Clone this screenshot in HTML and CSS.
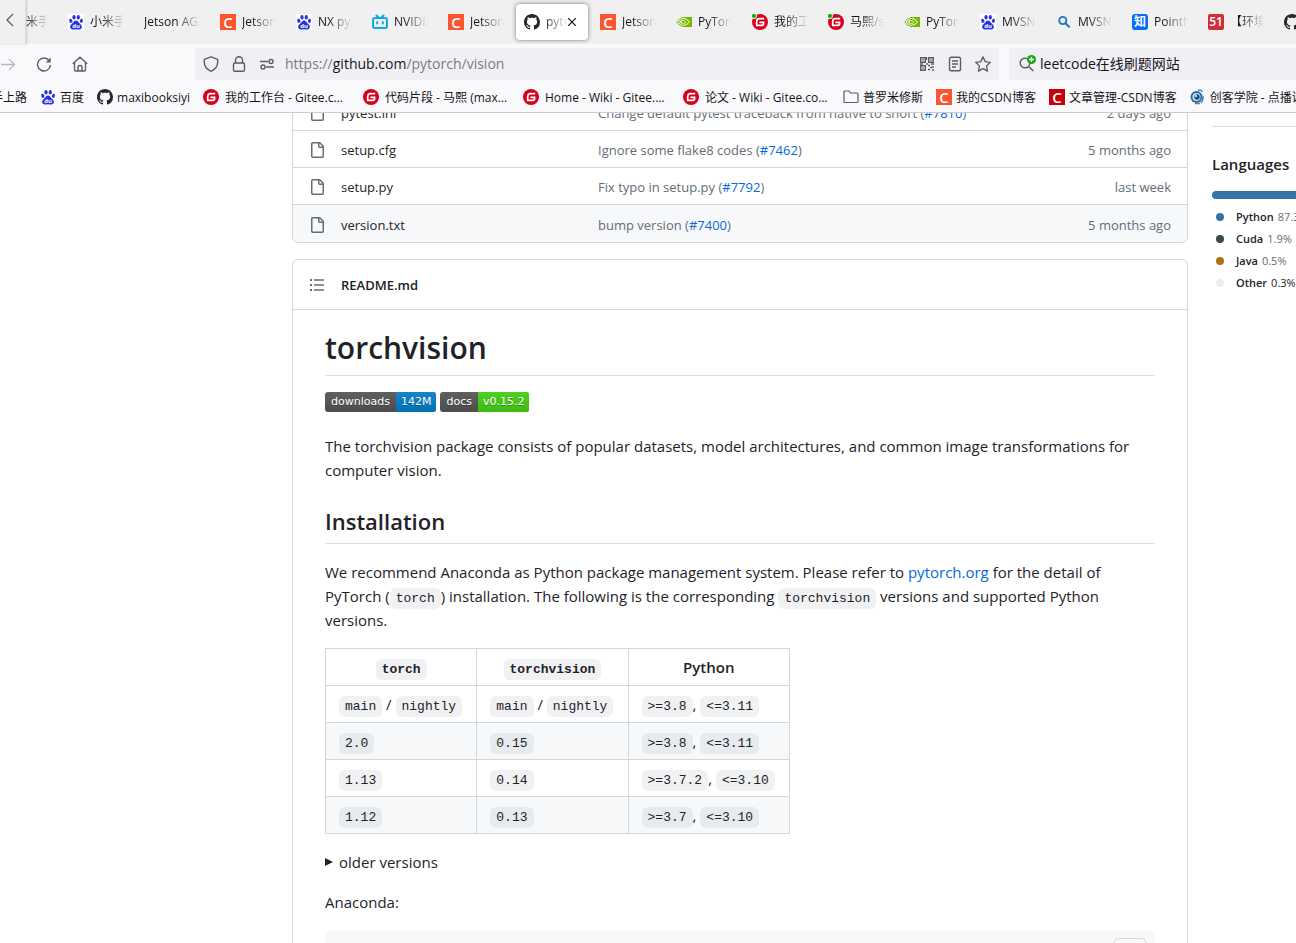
FILE: index.html
```html
<!DOCTYPE html>
<html lang="en">
<head>
    <meta charset="UTF-8">
    <meta name="viewport" content="width=device-width, initial-scale=1.0">
    <title>pytorch/vision</title>
    <link rel="stylesheet" href="styles.css">
</head>
<body>
    <svg class="sprite" aria-hidden="true">
        <symbol id="baidu" viewBox="0 0 16 16">
            <rect width="16" height="16" rx="1" fill="#fff"/>
            <g fill="#2932e1">
                <ellipse cx="6" cy="3.2" rx="1.6" ry="2.2"/>
                <ellipse cx="10.3" cy="3.2" rx="1.6" ry="2.2"/>
                <ellipse cx="2.8" cy="6.8" rx="1.6" ry="2.1" transform="rotate(-15 2.8 6.8)"/>
                <ellipse cx="13.4" cy="6.8" rx="1.5" ry="2.1" transform="rotate(15 13.4 6.8)"/>
                <path d="M8 6.4c1.6 0 2.3 1.4 3.3 2.5 1.2 1.3 2.6 2 2.6 3.9 0 1.700-1.200 2.700-2.700 2.700-1.200 0-2-.3-3.200-.3s-2 .3-3.200.3c-1.500 0-2.700-1-2.700-2.700 0-1.900 1.400-2.600 2.600-3.900C5.700 7.800 6.400 6.400 8 6.400z"/>
            </g>
            <text x="8" y="14" font-size="6" font-weight="700" text-anchor="middle" fill="#fff">du</text>
        </symbol>
        <symbol id="github" viewBox="0 0 16 16">
            <path fill="#24292f" fill-rule="evenodd" d="M8 0C3.580 0 0 3.580 0 8c0 3.540 2.290 6.530 5.470 7.590.4.070.550-.170.550-.380 0-.190-.010-.820-.010-1.490-2.010.370-2.530-.490-2.690-.940-.090-.230-.480-.940-.820-1.130-.280-.150-.680-.520-.010-.530.630-.010 1.080.580 1.230.820.720 1.210 1.870.870 2.330.660.070-.520.280-.870.510-1.070-1.780-.2-3.640-.890-3.640-3.950 0-.870.310-1.590.820-2.150-.080-.2-.360-1.020.080-2.120 0 0 .670-.210 2.200.820.640-.180 1.320-.270 2-.270s1.360.090 2 .270c1.530-1.040 2.200-.820 2.200-.820.440 1.100.160 1.920.080 2.120.510.560.820 1.270.820 2.150 0 3.070-1.870 3.750-3.650 3.950.290.250.540.730.540 1.480 0 1.070-.010 1.930-.010 2.200 0 .210.150.460.550.380A8.010 8.010 0 0 0 16 8c0-4.420-3.580-8-8-8z"/>
        </symbol>
        <symbol id="gitee" viewBox="0 0 16 16">
            <circle cx="8" cy="8" r="8" fill="#d8001b"/>
            <path d="M12.200 4.600H7.300Q4.700 4.600 4.700 7.200v4.200h5q1.900 0 1.900-1.900V8.300H7.400" fill="none" stroke="#fff" stroke-width="1.700"/>
        </symbol>
        <symbol id="gitee-on" viewBox="0 0 16 16">
            <use href="#gitee"/>
            <circle cx="2" cy="2" r="2.900" fill="#f0f0f0"/>
            <circle cx="2" cy="2" r="2.100" fill="#0ab50a"/>
        </symbol>
        <symbol id="bilibili" viewBox="0 0 16 16">
            <g fill="none" stroke="#0fa8e0" stroke-width="2" stroke-linecap="round">
                <path d="M4.500 1.500l2 2M11.500 1.500l-2 2"/>
                <rect x="1" y="4" width="14" height="10" rx="2"/>
                <path d="M5.200 8v1.500M10.800 8v1.500"/>
            </g>
        </symbol>
        <symbol id="nvidia" viewBox="0 0 16 16">
            <path d="M6 3h10v10H6z" fill="#76b900"/>
            <path d="M.8 8C3 4.500 6 4 8.500 4.500S13 7 14 8c-2 2.500-4.500 4-7.500 3.800S2 10 .8 8z" fill="none" stroke="#76b900"/>
            <path d="M6 4.400c3-.3 5.500 1 7.500 3.600-2 2.300-4.500 3.500-7.500 3.300" fill="none" stroke="#fff"/>
            <path d="M3 8c1.500-2.300 5.500-2.800 7.500 0C9 10.500 5 11 3 8z" fill="none" stroke="#76b900"/>
            <path d="M6 6.400c1.800-.2 3 .4 4 1.600-1 1.300-2.300 1.900-4 1.700" fill="none" stroke="#fff" stroke-width=".8"/>
        </symbol>
        <symbol id="lens" viewBox="0 0 16 16">
            <circle cx="6.800" cy="6.500" r="3.600" fill="none" stroke="#1a73c9" stroke-width="1.800"/>
            <path d="M9.500 9.200l3.500 3.500" stroke="#1a73c9" stroke-width="2" stroke-linecap="round"/>
        </symbol>
        <symbol id="maker" viewBox="0 0 16 16">
            <circle cx="6.500" cy="8" r="6" fill="#2a6da6"/>
            <circle cx="6.500" cy="8" r="4" fill="#cfe4f2"/>
            <circle cx="7" cy="8" r="2.700" fill="#174c80"/>
            <circle cx="6" cy="7" r="1" fill="#fff"/>
            <path d="M8 1.500q3-1.500 4.500 1.500M11 14q2.500-2 2-7" fill="none" stroke="#3c8ec4" stroke-width="1.500"/>
            <path d="M5 14.500h5" stroke="#777" stroke-width="1.500"/>
        </symbol>
        <symbol id="file" viewBox="0 0 16 16">
            <path fill="#656d76" d="M2 1.750C2 .784 2.784 0 3.750 0h6.586c.464 0 .909.184 1.237.513l2.914 2.914c.329.328.513.773.513 1.237v9.586A1.750 1.750 0 0 1 13.250 16h-9.500A1.750 1.750 0 0 1 2 14.250Zm1.750-.250a.250.250 0 0 0-.250.250v12.500c0 .138.112.250.250.250h9.500a.250.250 0 0 0 .250-.250V6h-2.750A1.750 1.750 0 0 1 9 4.250V1.500Zm6.750.062V4.250c0 .138.112.250.250.250h2.688l-.011-.013-2.914-2.914-.013-.011Z"/>
        </symbol>
    </svg>

    <header class="browser">
        <div class="tab-bar">
            <button class="scroll-left" aria-label="Scroll tabs left">
                <svg width="8" height="14" viewBox="0 0 8 14"><path d="M7 1L1 7l6 6" fill="none" stroke="#5b5b66" stroke-width="1.300"/></svg>
            </button>
            <div class="tabs">
                <button class="tab"><svg class="icon"><use href="#baidu"/></svg><span>小米手机</span></button>
                <button class="tab"><svg class="icon"><use href="#baidu"/></svg><span>小米手机</span></button>
                <button class="tab"><span>Jetson AGX</span></button>
                <button class="tab"><i class="icon csdn">C</i><span>Jetson Nano</span></button>
                <button class="tab"><svg class="icon"><use href="#baidu"/></svg><span>NX pytorch</span></button>
                <button class="tab"><svg class="icon"><use href="#bilibili"/></svg><span>NVIDIA</span></button>
                <button class="tab"><i class="icon csdn">C</i><span>Jetson Nano</span></button>
                <button class="tab active"><svg class="icon"><use href="#github"/></svg><span>pytorch</span><svg class="close" viewBox="0 0 8 8"><path d="M0 0l8 8M8 0L0 8" stroke="#15141a" stroke-width="1.200"/></svg></button>
                <button class="tab"><i class="icon csdn">C</i><span>Jetson Nano</span></button>
                <button class="tab"><svg class="icon"><use href="#nvidia"/></svg><span>PyTorch</span></button>
                <button class="tab"><svg class="icon"><use href="#gitee-on"/></svg><span>我的工作</span></button>
                <button class="tab"><svg class="icon"><use href="#gitee-on"/></svg><span>马熙/some</span></button>
                <button class="tab"><svg class="icon"><use href="#nvidia"/></svg><span>PyTorch</span></button>
                <button class="tab"><svg class="icon"><use href="#baidu"/></svg><span>MVSNet</span></button>
                <button class="tab"><svg class="icon"><use href="#lens"/></svg><span>MVSNet</span></button>
                <button class="tab"><i class="icon zhihu">知</i><span>PointNet</span></button>
                <button class="tab"><i class="icon cto">51</i><span>【环境配置</span></button>
                <button class="tab"><svg class="icon"><use href="#github"/></svg></button>
            </div>
        </div>

        <div class="nav-bar">
            <div class="nav-buttons">
                <button aria-label="Forward"><svg width="16" height="16" viewBox="0 0 16 16" fill="none" stroke="#b8b8be" stroke-width="1.300"><path d="M1 8.500h13.500M9 3l5.500 5.500L9 14"/></svg></button>
                <button aria-label="Reload"><svg width="16" height="16" viewBox="0 0 16 16" fill="none" stroke="#5b5b66" stroke-width="1.400"><path d="M13.500 5A6.500 6.500 0 1 0 14.500 9"/><path d="M14.700 1.500v5h-5z" fill="#5b5b66" stroke="none"/></svg></button>
                <button aria-label="Home"><svg width="16" height="16" viewBox="0 0 16 16" fill="none" stroke="#5b5b66" stroke-width="1.400" stroke-linejoin="round"><path d="M.8 7.800L8 1.200l7.200 6.600M2.500 6.500v7q0 1.500 1.500 1.500h8q1.500 0 1.500-1.500v-7M6 15v-4q0-1.500 2-1.500t2 1.500v4"/></svg></button>
            </div>
            <div class="url-box">
                <svg width="16" height="16" viewBox="0 0 16 16" fill="none" stroke="#5b5b66" stroke-width="1.400" stroke-linejoin="round"><path d="M8 .8l6.700 2.500v3C14.700 11 12 13.500 8 15.300 4 13.500 1.300 11 1.300 6.300v-3z"/></svg>
                <svg width="16" height="16" viewBox="0 0 16 16" fill="none" stroke="#5b5b66" stroke-width="1.400"><rect x="2.500" y="7" width="11" height="8.200" rx="1.500"/><path d="M4.500 7V4.200a3.500 3.500 0 0 1 7 0V7"/></svg>
                <svg width="16" height="16" viewBox="0 0 16 16" fill="none" stroke="#5b5b66" stroke-width="1.400"><path d="M1 5.500h8M7 11h8"/><circle cx="12" cy="5.500" r="2"/><circle cx="4" cy="11" r="2"/></svg>
                <a class="url" href="#">https://<b>github.com</b>/pytorch/vision</a>
                <svg width="16" height="16" viewBox="0 0 16 16" fill="none" stroke="#5b5b66" stroke-width="1.400"><path d="M1.700 1.700h4.600v4.600H1.700zM9.700 1.700h4.600v4.600H9.700zM1.700 9.700h4.600v4.600H1.700z"/><path d="M3.300 4h1.400M11.300 4h1.400M3.300 12h1.400M7.500 1v3M7 8h2M1 8h3M9 9.500h2M12 8h3M11 11.500h2M9 13.500h2M13 14h2M14 10v2"/></svg>
                <svg width="16" height="16" viewBox="0 0 16 16" fill="none" stroke="#5b5b66" stroke-width="1.400"><rect x="2.500" y="1.200" width="11" height="13.600" rx="1.800"/><path d="M5 5h6M5 8h6M5 11h4"/></svg>
                <svg width="16" height="16" viewBox="0 0 16 16" fill="none" stroke="#5b5b66" stroke-width="1.300" stroke-linejoin="round"><path d="M8 .9l2.200 4.700 5.100.7-3.700 3.600.9 5.200L8 12.600l-4.500 2.500.9-5.200L.7 6.300l5.100-.7z"/></svg>
            </div>
            <label class="search-box">
                <svg width="17" height="18" viewBox="0 0 17 18"><circle cx="6" cy="8" r="4.800" fill="none" stroke="#5b5b66" stroke-width="1.400"/><path d="M9.500 11.500l5 4.500" stroke="#5b5b66" stroke-width="1.500"/><circle cx="12.500" cy="4.500" r="4.500" fill="#12a812"/><path d="M12.500 2v5M10 4.500h5" stroke="#fff" stroke-width="1.400"/></svg>
                <input type="text" aria-label="Search" value="leetcode在线刷题网站">
            </label>
        </div>

        <nav class="bookmarks">
            <a class="cut" href="#">新手上路</a>
            <a href="#"><svg class="icon"><use href="#baidu"/></svg><span>百度</span></a>
            <a href="#"><svg class="icon"><use href="#github"/></svg><span>maxibooksiyi</span></a>
            <a class="wide" href="#"><svg class="icon"><use href="#gitee"/></svg><span>我的工作台 - Gitee.com</span></a>
            <a class="wide" href="#"><svg class="icon"><use href="#gitee"/></svg><span>代码片段 - 马熙 (maxibooksiyi)</span></a>
            <a class="wide" href="#"><svg class="icon"><use href="#gitee"/></svg><span>Home - Wiki - Gitee.com</span></a>
            <a class="wide" href="#"><svg class="icon"><use href="#gitee"/></svg><span>论文 - Wiki - Gitee.com/maxi</span></a>
            <a href="#"><svg class="icon" viewBox="0 0 16 16"><path d="M1 12.500V3q0-1 1-1h4l1.500 2H14q1 0 1 1v7.500q0 1-1 1H2q-1 0-1-1z" fill="none" stroke="#5b5b66" stroke-width="1.200"/></svg><span>普罗米修斯</span></a>
            <a href="#"><i class="icon csdn">C</i><span>我的CSDN博客</span></a>
            <a href="#"><i class="icon csdn-red">C</i><span>文章管理-CSDN博客</span></a>
            <a href="#"><svg class="icon"><use href="#maker"/></svg><span>创客学院 - 点播课程</span></a>
        </nav>
    </header>

    <div class="page">
        <main class="content">
            <table class="files">
                <tr>
                    <td class="type"><svg class="icon"><use href="#file"/></svg></td>
                    <td class="name"><a href="#">pytest.ini</a></td>
                    <td class="message">Change default pytest traceback from native to short (<a href="#">#7810</a>)</td>
                    <td class="age">2 days ago</td>
                </tr>
                <tr>
                    <td class="type"><svg class="icon"><use href="#file"/></svg></td>
                    <td class="name"><a href="#">setup.cfg</a></td>
                    <td class="message">Ignore some flake8 codes (<a href="#">#7462</a>)</td>
                    <td class="age">5 months ago</td>
                </tr>
                <tr>
                    <td class="type"><svg class="icon"><use href="#file"/></svg></td>
                    <td class="name"><a href="#">setup.py</a></td>
                    <td class="message">Fix typo in setup.py (<a href="#">#7792</a>)</td>
                    <td class="age">last week</td>
                </tr>
                <tr class="hovered">
                    <td class="type"><svg class="icon"><use href="#file"/></svg></td>
                    <td class="name"><a href="#">version.txt</a></td>
                    <td class="message">bump version (<a href="#">#7400</a>)</td>
                    <td class="age">5 months ago</td>
                </tr>
            </table>

            <section class="readme">
                <div class="readme-header">
                    <svg class="icon" viewBox="0 0 16 16" fill="#656d76"><path d="M5 2.300h10v1.400H5zM5 7.300h10v1.400H5zM5 12.300h10v1.400H5zM1 2h2v2H1zM1 7h2v2H1zM1 12h2v2H1z"/></svg>
                    <a href="#">README.md</a>
                </div>
                <article class="markdown">
                    <h1>torchvision</h1>
                    <div class="badges">
                        <a class="badge" href="#"><span>downloads</span><span class="blue">142M</span></a>
                        <a class="badge" href="#"><span>docs</span><span class="green">v0.15.2</span></a>
                    </div>
                    <p>The torchvision package consists of popular datasets, model architectures, and common image transformations for computer vision.</p>
                    <h2>Installation</h2>
                    <p>We recommend Anaconda as Python package management system. Please refer to <a href="#">pytorch.org</a> for the detail of PyTorch (<code>torch</code>) installation. The following is the corresponding <code>torchvision</code> versions and supported Python versions.</p>
                    <table class="versions">
                        <thead>
                            <tr><th><code>torch</code></th><th><code>torchvision</code></th><th>Python</th></tr>
                        </thead>
                        <tbody>
                            <tr><td><code>main</code> / <code>nightly</code></td><td><code>main</code> / <code>nightly</code></td><td><code>&gt;=3.8</code>, <code>&lt;=3.11</code></td></tr>
                            <tr><td><code>2.0</code></td><td><code>0.15</code></td><td><code>&gt;=3.8</code>, <code>&lt;=3.11</code></td></tr>
                            <tr><td><code>1.13</code></td><td><code>0.14</code></td><td><code>&gt;=3.7.2</code>, <code>&lt;=3.10</code></td></tr>
                            <tr><td><code>1.12</code></td><td><code>0.13</code></td><td><code>&gt;=3.7</code>, <code>&lt;=3.10</code></td></tr>
                        </tbody>
                    </table>
                    <details>
                        <summary>older versions</summary>
                    </details>
                    <p>Anaconda:</p>
                    <div class="snippet"><button aria-label="Copy"></button></div>
                </article>
            </section>
        </main>

        <aside class="sidebar">
            <h2>Languages</h2>
            <div class="lang-bar"></div>
            <ul>
                <li><i class="dot python"></i><b>Python</b> <span>87.3%</span></li>
                <li><i class="dot cuda"></i><b>Cuda</b> <span>1.9%</span></li>
                <li><i class="dot java"></i><b>Java</b> <span>0.5%</span></li>
                <li><i class="dot other"></i><b>Other</b> 0.3%</li>
            </ul>
        </aside>
    </div>
</body>
</html>
```
FILE: styles.css
```css
* {
    box-sizing: border-box;
}

body {
    margin: 0;
    height: 100vh;
    display: flex;
    flex-direction: column;
    overflow: hidden;
    background: #fff;
    color: #1f2328;
    font-family: "Open Sans", "Noto Sans CJK SC", sans-serif;
    font-size: 15px;
    line-height: 24px;
}

a {
    color: #0969da;
    text-decoration: none;
}

button {
    padding: 0;
    border: 0;
    background: none;
    color: inherit;
    font: inherit;
}

.sprite {
    position: absolute;
    width: 0;
    height: 0;
}

.icon {
    flex: none;
    display: block;
    width: 16px;
    height: 16px;
}

/* browser chrome */
.browser {
    flex: none;
    background: #f9f9fb;
    border-bottom: 1px solid #ccc;
    color: #15141a;
    font-size: 12px;
    line-height: 16px;
}

.tab-bar {
    display: flex;
    height: 44px;
    background: #f0f0f0;
}

.scroll-left {
    flex: none;
    width: 26px;
    padding-right: 6px;
    border-right: 1px solid #ddd;
    box-shadow: 1px 0 2px #ccc;
}

.tabs {
    flex: 1;
    display: flex;
    min-width: 0;
    overflow: hidden;
}

.tab {
    flex: 0 0 72px;
    display: flex;
    align-items: center;
    gap: 6px;
    min-width: 0;
    height: 36px;
    margin: 4px 2px;
    padding: 0 8px;
    border-radius: 4px;
    text-align: left;
}

.tab:first-child {
    margin-left: -42px;
}

.tab span {
    flex: 1;
    min-width: 0;
    overflow: hidden;
    white-space: nowrap;
    line-height: 18px;
    mask-image: linear-gradient(to left, transparent, #000 24px);
}

.tab.active {
    background: #fff;
    box-shadow: 0 0 4px rgba(0, 0, 0, 0.5);
}

.close {
    flex: none;
    width: 8px;
    height: 8px;
    margin-left: -6px;
    margin-right: 4px;
}

i.icon {
    font-style: normal;
    font-weight: 600;
    line-height: 16px;
    text-align: center;
    color: #fff;
}

.csdn {
    background: #fc5531;
    font-size: 15px;
}

.csdn-red {
    background: #c7000b;
    font-size: 15px;
}

.zhihu {
    border-radius: 3px;
    background: #0a6cff;
    font-size: 12px;
}

.cto {
    border-radius: 2px;
    background: #cf2e38;
    font-size: 12px;
}

.nav-bar {
    display: flex;
    align-items: center;
    height: 40px;
}

.nav-buttons {
    flex: none;
    display: flex;
    gap: 20px;
    width: 195px;
}

.nav-buttons button,
.nav-buttons svg {
    display: block;
}

.url-box,
.search-box {
    display: flex;
    align-items: center;
    height: 32px;
    border-radius: 4px;
    background: #f0f0f4;
    font-size: 14px;
}

.url-box {
    flex: 1;
    gap: 12px;
    margin-right: 10px;
    padding: 0 8px;
}

.url {
    flex: 1;
    margin-left: -2px;
    color: #7c7b82;
    line-height: 20px;
}

.url b {
    color: #15141a;
    font-weight: 400;
}

.search-box {
    flex: 0 0 287px;
    gap: 4px;
    padding-left: 10px;
}

.search-box input {
    flex: 1;
    min-width: 0;
    padding: 0;
    border: 0;
    outline: 0;
    background: none;
    color: #15141a;
    font: inherit;
}

.bookmarks {
    display: flex;
    align-items: center;
    gap: 13px;
    height: 28px;
    overflow: hidden;
    white-space: nowrap;
}

.bookmarks a {
    flex: none;
    display: flex;
    gap: 4px;
    color: #15141a;
    line-height: 18px;
}

.bookmarks .cut {
    margin-left: -21px;
}

.bookmarks .wide {
    width: 147px;
    gap: 6px;
}

.bookmarks span {
    overflow: hidden;
    text-overflow: ellipsis;
}

/* repository page */
.page {
    flex: 1;
    display: flex;
    gap: 24px;
    min-height: 0;
    padding-left: 292px;
    overflow: hidden;
}

.content {
    flex: 1;
    min-width: 0;
    margin-top: -20px;
}

.files {
    width: 100%;
    border: 1px solid #d0d7de;
    border-radius: 6px;
    border-spacing: 0;
    overflow: hidden;
    font-size: 13px;
    line-height: 20px;
}

.files td {
    height: 37px;
    padding: 2px 0 0;
    border-bottom: 1px solid #d0d7de;
}

.files tr:last-child td {
    border-bottom: 0;
}

.files .type {
    width: 48px;
    padding-left: 16px;
}

.files .name {
    width: 257px;
}

.files .name a {
    color: #1f2328;
}

.files .message,
.files .age {
    color: #656d76;
}

.files .age {
    padding-right: 16px;
    text-align: right;
}

.hovered {
    background: #f6f8fa;
}

.readme {
    height: 900px;
    margin-top: 16px;
    border: 1px solid #d0d7de;
    border-radius: 6px;
}

.readme-header {
    display: flex;
    align-items: center;
    gap: 16px;
    height: 50px;
    padding: 0 16px;
    border-bottom: 1px solid #d0d7de;
    font-size: 13px;
    font-weight: 600;
}

.readme-header a {
    color: #1f2328;
}

.markdown {
    padding: 18px 32px;
}

.markdown h1,
.markdown h2 {
    margin: 0 0 16px;
    padding-bottom: 7px;
    border-bottom: 1px solid #d8dee4;
    font-weight: 600;
}

.markdown h1 {
    font-size: 30px;
    line-height: 40px;
}

.markdown h2 {
    margin-top: 24px;
    font-size: 22px;
    line-height: 30px;
}

.markdown p {
    margin: 0 0 16px;
}

.badges {
    display: flex;
    gap: 4px;
    height: 26px;
    margin-bottom: 16px;
}

.badge {
    display: flex;
    height: 20px;
    border-radius: 3px;
    overflow: hidden;
    background: linear-gradient(#606060, #4c4c4c);
    color: #fff;
    font: 11px/20px "DejaVu Sans", sans-serif;
    text-shadow: 0 1px rgba(1, 1, 1, 0.3);
}

.badge span {
    padding: 0 6px;
}

.badge .blue,
.badge .green {
    padding: 0 5px;
}

.badge .blue {
    background: linear-gradient(#1485c8, #0071b3);
}

.badge .green {
    background: linear-gradient(#4fd021, #3fb912);
}

code {
    padding: 3px 6px;
    border-radius: 6px;
    background: rgba(175, 184, 193, 0.2);
    font: 13px "Liberation Mono", monospace;
}

.versions {
    width: 465px;
    margin-bottom: 16px;
    border-collapse: collapse;
}

.versions th,
.versions td {
    height: 37px;
    padding: 6px 13px;
    border: 1px solid #d0d7de;
    white-space: nowrap;
}

.versions th,
.versions th code {
    font-weight: 600;
}

.versions tbody tr:nth-child(even) {
    background: #f6f8fa;
}

.markdown details {
    margin-bottom: 16px;
}

.markdown summary {
    display: flex;
    align-items: center;
    gap: 6px;
}

.markdown summary::before {
    content: "";
    border: 4px solid transparent;
    border-left: 8px solid #1f2328;
    border-right: 0;
}

.snippet {
    display: flex;
    justify-content: flex-end;
    height: 80px;
    padding: 8px;
    border-radius: 6px;
    background: #f6f8fa;
}

.snippet button {
    width: 34px;
    height: 34px;
    border: 1px solid #d5d9dd;
    border-radius: 6px;
}

.sidebar {
    flex: 0 0 84px;
    margin-top: 13px;
    border-top: 1px solid #d8dee4;
    overflow: hidden;
    white-space: nowrap;
    font-size: 11px;
}

.sidebar h2 {
    margin: 25px 0 15px;
    font-size: 15px;
    font-weight: 600;
    line-height: 24px;
}

.lang-bar {
    height: 8px;
    margin-bottom: 7px;
    border-radius: 6px 0 0 6px;
    background: #3572a5;
}

.sidebar ul {
    margin: 0;
    padding: 0;
    list-style: none;
}

.sidebar li {
    display: flex;
    align-items: center;
    gap: 4px;
    height: 22px;
}

.sidebar b {
    font-weight: 600;
}

.sidebar span {
    color: #656d76;
}

.dot {
    flex: none;
    width: 8px;
    height: 8px;
    margin: 0 8px 0 4px;
    border-radius: 50%;
}

.python {
    background: #3572a5;
}

.cuda {
    background: #3a4e3a;
}

.java {
    background: #b07219;
}

.other {
    background: #ededed;
}
```
